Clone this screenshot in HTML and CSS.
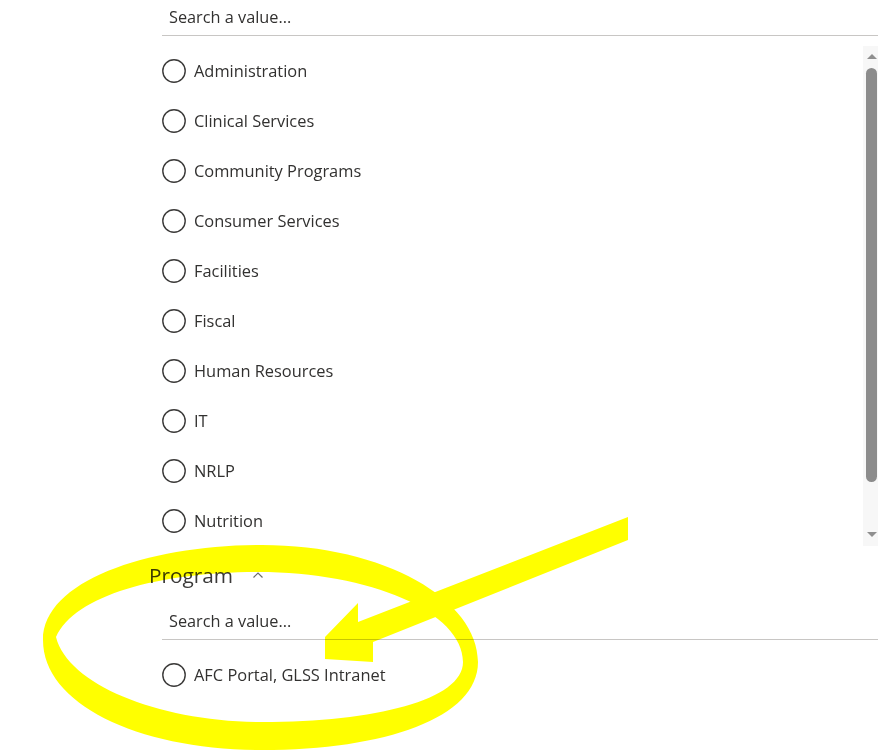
FILE: index.html
```html
<!DOCTYPE html>
<html>
<head>
<meta charset="utf-8">
<link rel="stylesheet" href="styles.css">
</head>
<body>
<div class="panel">
  <div class="search"><span class="placeholder">Search a value...</span></div>
  <div class="listwrap">
    <ul class="list">
      <li class="item"><svg class="radio" width="24" height="24" viewBox="0 0 24 24"><circle cx="12" cy="12" r="11.2"/></svg><span>Administration</span></li>
      <li class="item"><svg class="radio" width="24" height="24" viewBox="0 0 24 24"><circle cx="12" cy="12" r="11.2"/></svg><span>Clinical Services</span></li>
      <li class="item"><svg class="radio" width="24" height="24" viewBox="0 0 24 24"><circle cx="12" cy="12" r="11.2"/></svg><span>Community Programs</span></li>
      <li class="item"><svg class="radio" width="24" height="24" viewBox="0 0 24 24"><circle cx="12" cy="12" r="11.2"/></svg><span>Consumer Services</span></li>
      <li class="item"><svg class="radio" width="24" height="24" viewBox="0 0 24 24"><circle cx="12" cy="12" r="11.2"/></svg><span>Facilities</span></li>
      <li class="item"><svg class="radio" width="24" height="24" viewBox="0 0 24 24"><circle cx="12" cy="12" r="11.2"/></svg><span>Fiscal</span></li>
      <li class="item"><svg class="radio" width="24" height="24" viewBox="0 0 24 24"><circle cx="12" cy="12" r="11.2"/></svg><span>Human Resources</span></li>
      <li class="item"><svg class="radio" width="24" height="24" viewBox="0 0 24 24"><circle cx="12" cy="12" r="11.2"/></svg><span>IT</span></li>
      <li class="item"><svg class="radio" width="24" height="24" viewBox="0 0 24 24"><circle cx="12" cy="12" r="11.2"/></svg><span>NRLP</span></li>
      <li class="item"><svg class="radio" width="24" height="24" viewBox="0 0 24 24"><circle cx="12" cy="12" r="11.2"/></svg><span>Nutrition</span></li>
    </ul>
    <div class="scrollbar">
      <div class="arrow up"></div>
      <div class="thumb"></div>
      <div class="arrow down"></div>
    </div>
  </div>
  <div class="section-head">
    <span class="section-title">Program</span>
    <svg class="chevron" width="12" height="8" viewBox="0 0 12 8"><path d="M1.5 6.5 L6 2 L10.5 6.5"/></svg>
  </div>
  <div class="search"><span class="placeholder">Search a value...</span></div>
  <ul class="list single">
    <li class="item"><svg class="radio" width="24" height="24" viewBox="0 0 24 24"><circle cx="12" cy="12" r="11.2"/></svg><span>AFC Portal, GLSS Intranet</span></li>
  </ul>
</div>
<svg class="annotation" width="878" height="752" viewBox="0 0 878 752">
  <path fill-rule="evenodd" d="M43 640 C43 580 150 545 262 545 C385 545 478 600 478 662 C478 718 385 750 262 750 C140 750 43 705 43 640 Z M56 637 C75 595 160 572 258 572 C370 572 463 612 463 662 C463 700 375 722 262 722 C160 722 68 685 56 637 Z"/>
  <polygon points="628,517 628,540 373,642 373,662 325,659 325,637 358,603 358,622"/>
</svg>
</body>
</html>
```
FILE: styles.css
```css
html, body {
  margin: 0;
  padding: 0;
  background: #ffffff;
}
body {
  font-family: "Open Sans", "Noto Sans", sans-serif;
  color: #323130;
  width: 878px;
  height: 752px;
  overflow: hidden;
  position: relative;
}
.panel {
  padding-left: 149px;
}
.search {
  margin-left: 13px;
  border-bottom: 1px solid #c8c6c4;
  display: flex;
  align-items: center;
  padding-left: 7px;
  box-sizing: border-box;
  height: 36px;
  padding-bottom: 2px;
}
.placeholder {
  font-size: 16.3px;
  color: #323130;
}
.listwrap {
  display: flex;
  margin-top: 10px;
  height: 500px;
}
.list {
  list-style: none;
  margin: 0;
  padding: 0 0 0 13px;
  flex: 1;
  overflow: hidden;
}
.item {
  height: 50px;
  display: flex;
  align-items: center;
  gap: 8px;
  font-size: 16.4px;
}
.item span {
  position: relative;
  top: -1px;
}
.radio {
  flex: none;
}
.radio circle {
  fill: none;
  stroke: #3b3a39;
  stroke-width: 1.4;
}
.scrollbar {
  width: 15px;
  background: #f7f7f7;
  display: flex;
  flex-direction: column;
  align-items: center;
  box-sizing: border-box;
  padding: 8px 0 9px 2px;
}
.arrow {
  width: 0;
  height: 0;
  border-left: 5px solid transparent;
  border-right: 5px solid transparent;
}
.arrow.up {
  border-bottom: 5px solid #8f8f8f;
}
.arrow.down {
  border-top: 5px solid #8f8f8f;
}
.thumb {
  width: 11px;
  height: 414px;
  margin-top: 9px;
  background: #8c8c8c;
  border-radius: 6px;
  margin-bottom: auto;
}
.section-head {
  height: 58px;
  display: flex;
  align-items: center;
  gap: 19px;
}
.section-title {
  font-size: 20.8px;
  color: #3b3a39;
}
.chevron path {
  fill: none;
  stroke: #6b6b6b;
  stroke-width: 1.2;
}
.list.single {
  margin-top: 10px;
}
.annotation {
  position: absolute;
  left: 0;
  top: 0;
  pointer-events: none;
  mix-blend-mode: multiply;
  fill: #ffff00;
}
```
